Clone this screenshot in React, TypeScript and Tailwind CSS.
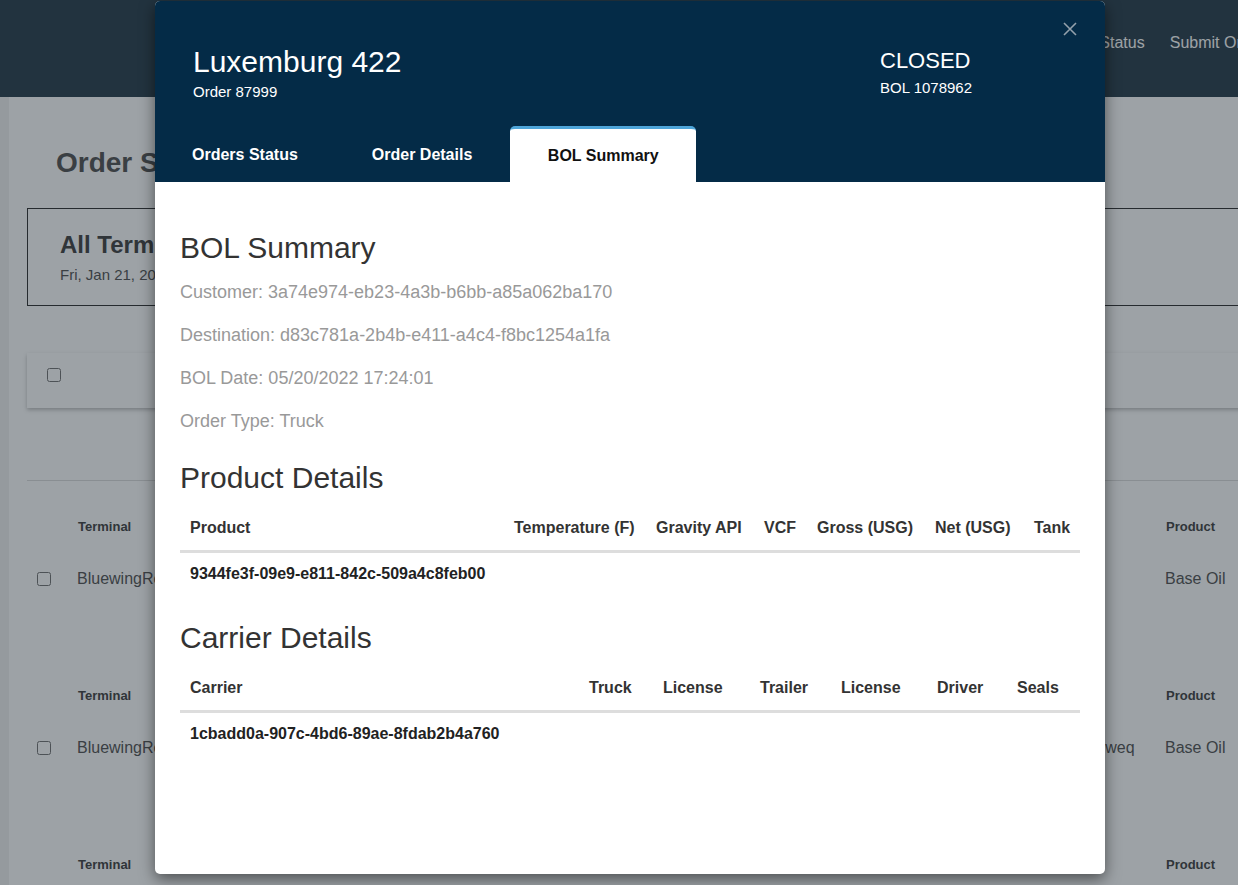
import React from "react";

const productCols = [
  { label: "Product", w: "w-[324px]" },
  { label: "Temperature (F)", w: "w-[142px]" },
  { label: "Gravity API", w: "w-[108px]" },
  { label: "VCF", w: "w-[53px]" },
  { label: "Gross (USG)", w: "w-[118px]" },
  { label: "Net (USG)", w: "w-[99px]" },
  { label: "Tank", w: "w-[56px]" },
];

const carrierCols = [
  { label: "Carrier", w: "w-[399px]" },
  { label: "Truck", w: "w-[74px]" },
  { label: "License", w: "w-[97px]" },
  { label: "Trailer", w: "w-[81px]" },
  { label: "License", w: "w-[96px]" },
  { label: "Driver", w: "w-[80px]" },
  { label: "Seals", w: "w-[73px]" },
];

function DetailTable({
  cols,
  first,
}: {
  cols: { label: string; w: string }[];
  first: string;
}) {
  return (
    <table className="w-[900px] table-fixed border-collapse">
      <thead>
        <tr className="border-b-[3px] border-[#dddddd]">
          {cols.map((c, i) => (
            <th
              key={i}
              className={`${c.w} px-[10px] pt-[18px] pb-[12px] text-left text-[16px] leading-[20px] font-bold text-[#333] whitespace-nowrap`}
            >
              {c.label}
            </th>
          ))}
        </tr>
      </thead>
      <tbody>
        <tr>
          <td className="px-[10px] pt-[11px] pb-[13px] text-[16px] leading-[20px] font-bold text-[#222] whitespace-nowrap">
            {first}
          </td>
          {cols.slice(1).map((_, i) => (
            <td key={i} className="px-[10px]" />
          ))}
        </tr>
      </tbody>
    </table>
  );
}

function BackgroundGroup({ extra }: { extra?: string }) {
  return (
    <div className="pt-[38px]">
      {/** header row */}
      <div className="flex pl-[10px] text-[13px] leading-[16px] font-bold text-[#444]">
        <div className="w-[14px] mr-[27px]" />
        <div className="w-[990px]">Terminal</div>
        <div className="w-[98px]" />
        <div>Product</div>
      </div>
      {/** data row */}
      <div className="flex items-center pl-[10px] mt-[34px] text-[16px] leading-[20px] text-[#555]">
        <input type="checkbox" readOnly className="m-0 w-[14px] h-[14px] mr-[26px]" />
        <div className="w-[990px]">BluewingRefinery</div>
        <div className="w-[98px]">{extra ?? ""}</div>
        <div>Base Oil</div>
      </div>
    </div>
  );
}

export default function App() {
  return (
    <div className="relative h-[885px] w-full overflow-hidden bg-white font-['Liberation_Sans',Arial,sans-serif]">
      {/** Page behind the dialog */}
      <header className="h-[97px] bg-[#2b404e] flex pl-[1054px] pt-[33px] gap-[25px] whitespace-nowrap text-[16px] leading-[20px] text-white">
        <span>Order Status</span>
        <span>Submit Order</span>
      </header>
      <div className="flex">
        <div className="w-[9px] shrink-0 bg-[#f2f2f2] h-[800px]" />
        <main className="w-[1260px] shrink-0 pl-[18px]">
          <h1 className="mt-[49px] pl-[29px] text-[28px] leading-[34px] font-bold text-[#555]">
            Order Summary
          </h1>
          <div className="mt-[28px] h-[98px] border border-[#333] pl-[32px] pt-[22px]">
            <div className="text-[24px] leading-[28px] font-bold text-[#444]">All Terminals</div>
            <div className="mt-[7px] text-[15px] leading-[18px] text-[#555]">Fri, Jan 21, 2022</div>
          </div>
          <div className="mt-[47px] h-[55px] flex items-start pt-[15px] pl-[20px] shadow-[0_2px_4px_rgba(0,0,0,0.25)]">
            <input type="checkbox" readOnly className="m-0 w-[14px] h-[14px]" />
          </div>
          <div className="mt-[72px] border-t border-[#dcdcdc]">
            <BackgroundGroup />
            <div className="mt-[61px]">
              <BackgroundGroup extra="qweqweq" />
            </div>
            <div className="mt-[61px]">
              <BackgroundGroup />
            </div>
          </div>
        </main>
      </div>

      {/** Dim overlay */}
      <div className="absolute inset-0 bg-[#15212b]/[0.42]" />

      {/** Dialog */}
      <div className="absolute left-[155px] top-[1px] w-[950px] h-[873px] bg-white rounded-[5px] overflow-hidden shadow-[0_5px_15px_rgba(0,0,0,0.5)]">
        <div className="relative h-[181px] bg-[#042b47] text-white">
          <button className="absolute right-[28px] top-[21px] p-0 text-[#93a0ab]">
            <svg width="14" height="14" viewBox="0 0 14 14" fill="none" stroke="currentColor" strokeWidth="1.6">
              <path d="M1 1 L13 13 M13 1 L1 13" />
            </svg>
          </button>
          <div className="flex pl-[38px] pt-[43px]">
            <div className="w-[687px]">
              <div className="text-[30px] leading-[36px]">Luxemburg 422</div>
              <div className="mt-[3px] text-[15px] leading-[18px]">Order 87999</div>
            </div>
            <div className="pt-[3px]">
              <div className="text-[22px] leading-[28px]">CLOSED</div>
              <div className="mt-[4px] text-[15px] leading-[18px]">BOL 1078962</div>
            </div>
          </div>
          <nav className="flex mt-[25px] text-[16px] font-bold">
            <div className="h-[57px] px-[37px] pt-px flex items-center">Orders Status</div>
            <div className="h-[57px] px-[37px] pt-px flex items-center">Order Details</div>
            <div className="h-[57px] w-[186px] ml-px px-[37px] flex items-center justify-center bg-white text-[#111] border-t-[3px] border-[#4ea5d9] rounded-t-[5px]">
              BOL Summary
            </div>
          </nav>
        </div>

        <div className="px-[25px]">
          <h2 className="mt-[48px] text-[30px] leading-[36px] text-[#333]">BOL Summary</h2>
          <div className="mt-[5px] text-[18px] leading-[43px] text-[#999]">
            <p>Customer: 3a74e974-eb23-4a3b-b6bb-a85a062ba170</p>
            <p>Destination: d83c781a-2b4b-e411-a4c4-f8bc1254a1fa</p>
            <p>BOL Date: 05/20/2022 17:24:01</p>
            <p>Order Type: Truck</p>
          </div>
          <h3 className="mt-[17px] mb-[4px] text-[30px] leading-[36px] text-[#333]">Product Details</h3>
          <DetailTable cols={productCols} first="9344fe3f-09e9-e811-842c-509a4c8feb00" />
          <h3 className="mt-[23px] mb-[4px] text-[30px] leading-[36px] text-[#333]">Carrier Details</h3>
          <DetailTable cols={carrierCols} first="1cbadd0a-907c-4bd6-89ae-8fdab2b4a760" />
        </div>
      </div>
    </div>
  );
}
